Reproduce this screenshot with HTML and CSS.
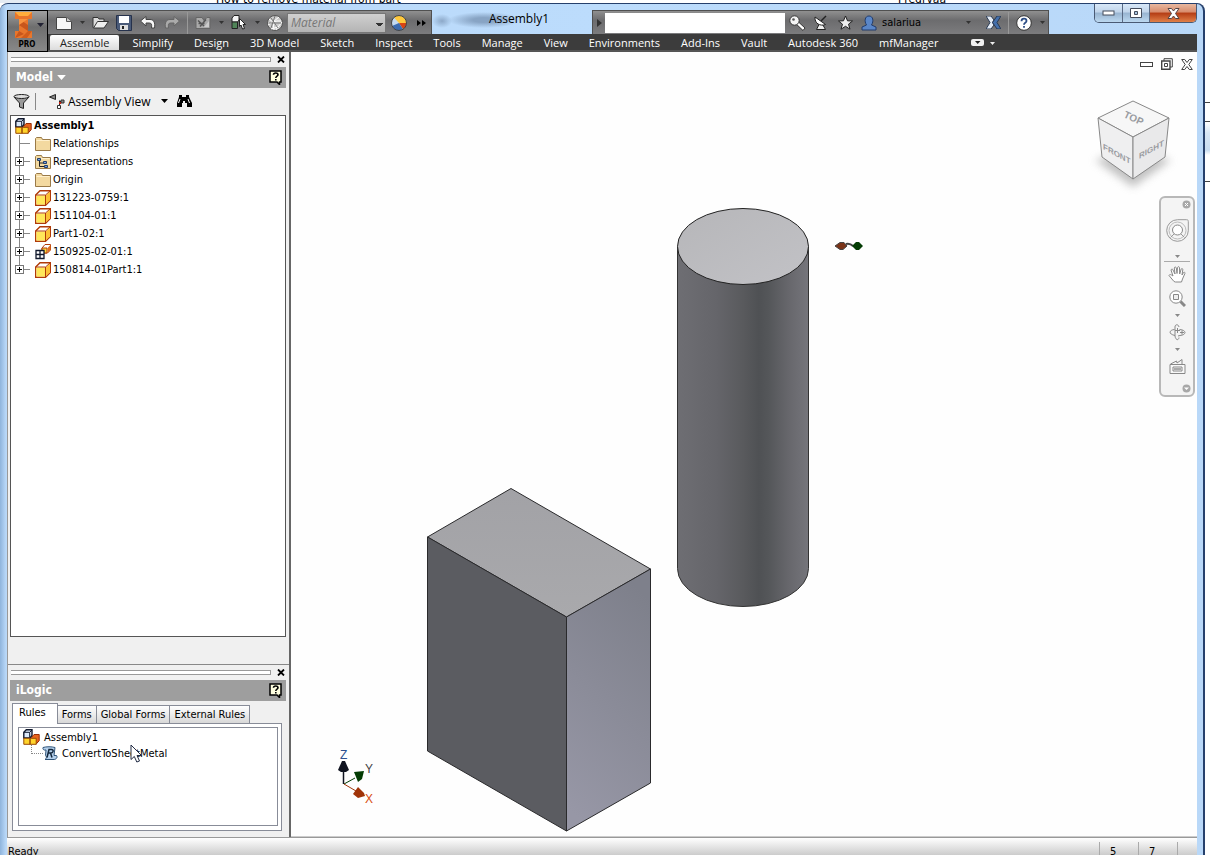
FILE: index.html
```html
<!DOCTYPE html>
<html lang="en">
<head>
    <meta charset="UTF-8">
    <meta name="viewport" content="width=device-width, initial-scale=1.0">
    <title>Assembly1</title>
    <link rel="stylesheet" href="styles.css">
</head>
<body>
    <svg class="defs" aria-hidden="true">
        <symbol id="folder" viewBox="0 0 16 16">
            <path d="M.5 14.5v-12l1-1h5l1 2h8v11z" fill="#f3d9a0" stroke="#9a7a48"/>
            <path d="M1.5 4.500h13" stroke="#fff0cc"/>
        </symbol>
        <symbol id="part" viewBox="0 0 16 16">
            <path d="M.7 5 5 .7h10.300v9.800l-4.800 4.800H.7z" fill="#fff" stroke="#b03a08" stroke-width="1.400"/>
            <path d="M1.400 5.500h8.800v9.100H1.400z" fill="#ffe75a"/>
            <path d="M10.800 5.500 15 1.500v8.800l-4.200 4.200z" fill="#fcc034"/>
            <path d="M.7 5h9.800v10.300M10.500 5 15.300.7" fill="none" stroke="#b03a08"/>
        </symbol>
        <symbol id="assembly" viewBox="0 0 17 16">
            <path d="M.8 9V3.200L3.300.8H9v5.700L7 9z" fill="#dce9fa" stroke="#10182c" stroke-width="1.400"/>
            <path d="M6.700 8.500V3.300H1M6.700 3.300 9 1" fill="none" stroke="#10182c"/>
            <path d="m8.500 8.500 2.500-3h5.200v6.200L13 15.200z" fill="#e8641c" stroke="#9a2c04"/>
            <path d="M.8 9.300h6.200v6H.8zM7 9.300h6.200v6H7z" fill="#ffd42c" stroke="#9a4a04"/>
        </symbol>
        <symbol id="help" viewBox="0 0 14 15">
            <path d="M1 1h11v11h-1.500v2.500L8 12H1z" fill="#ffffe0" stroke="#000" stroke-width="1.500"/>
            <path d="M4.500 4.800C4.500 2.300 9 2.300 9 4.800 9 6.300 6.800 6 6.800 8M6.800 9v1.600" fill="none" stroke="#000" stroke-width="1.600"/>
        </symbol>
        <symbol id="down" viewBox="0 0 7 4"><path d="M0 0h7L3.500 4z" fill="currentColor"/></symbol>
        <symbol id="cross" viewBox="0 0 8 7"><path d="M1 .5 7 6.500M7 .5 1 6.500" stroke="#000" stroke-width="1.800"/></symbol>
    </svg>

    <div class="behind">
        <span>How to remove material from part</span>
        <span>Predrvaa</span>
    </div>

    <div class="window">
        <header class="header">
            <button class="app-button" aria-label="Application menu">
                <svg width="17" height="26" viewBox="0 0 17 26">
                    <path d="M0 0h17v7h-4v12h4v7H0v-7h4V7H0z" fill="#e8762c"/>
                    <path d="M0 0h17l-4 4H4z" fill="#ffae3c"/>
                    <path d="m4 7 9 6v6l-9-6z" fill="#c8561c"/>
                    <path d="m0 26 4-7 5 3z" fill="#c8561c"/>
                    <path d="m13 7-9 6V7z" fill="#f89440"/>
                    <path d="m17 19-5 7H6l7-7z" fill="#d05c1c"/>
                </svg>
                <span>PRO</span>
                <svg class="app-arrow" width="7" height="4"><use href="#down"/></svg>
            </button>

            <div class="titlebar">
                <div class="quick">
                    <button aria-label="New"><svg width="16" height="14"><path d="M.5 1.500h10l5 4v8H.5z" fill="#f6f6f6" stroke="#444"/><path d="M10.500 1.500v4h5" fill="#ccc" stroke="#555"/></svg></button>
                    <button class="drop" aria-label="New options"><svg width="5" height="3"><use href="#down"/></svg></button>
                    <button aria-label="Open"><svg width="17" height="13"><path d="M1 11.500v-10h5l1 1.500h5v3" fill="#ddd" stroke="#333"/><path d="m1.500 12 4-6.500h11l-4.500 6.500z" fill="#eee" stroke="#333"/></svg></button>
                    <button aria-label="Save"><svg width="16" height="16"><path d="M.5.5h15v15h-13l-2-2z" fill="#4a5a78" stroke="#26324c"/><path d="M3 1h10v7H3z" fill="#fff"/><path d="M4 10h8v5H4z" fill="#ddd"/><path d="M6 11h2v3H6z" fill="#222"/></svg></button>
                    <button aria-label="Undo"><svg width="16" height="13"><path d="m.5 5 5.500-4.500v3h4c3.500 0 5.500 3 4.500 8.500h-3c.5-3.500 0-5-2-5H6v3z" fill="#f8f8f8" stroke="#444"/></svg></button>
                    <button aria-label="Redo"><svg width="16" height="13"><path d="M15.500 5 10 .5v3H6C2.500 3.500.5 6.500 1.500 12h3C4 8.500 4.500 7 6.500 7H10v3z" fill="#aaa" stroke="#666"/></svg></button>
                    <i class="divider"></i>
                    <button aria-label="Update"><svg width="17" height="15"><path d="M1 2.500h6l2 3 3-3h3v11H1z" fill="#aaa" stroke="#666"/><path d="M3 5.500 9 11M11 4.500 5 11.500M3.500 8.500h6" stroke="#555" stroke-width="1.500"/><path d="m9 12 5-6v6z" fill="#ccc"/></svg></button>
                    <button class="drop" aria-label="Update options"><svg width="5" height="3"><use href="#down"/></svg></button>
                    <button aria-label="Select"><svg width="16" height="15"><path d="M1 3 3 .5h5V5L6.500 7H1z" fill="#f4f4f4" stroke="#222"/><path d="M1 7h5.500v6.500H1z" fill="#508458" stroke="#222"/><path d="m8.500 3.500 6 6H12l1.500 4-2 .5-1.500-4-1.500 1.500z" fill="#fff" stroke="#222"/></svg></button>
                    <button class="drop" aria-label="Select options"><svg width="5" height="3"><use href="#down"/></svg></button>
                    <button aria-label="Appearance"><svg width="16" height="16"><circle cx="8" cy="8" r="7.500" fill="#ccc" stroke="#555"/><path d="m2 4 4 3 6-5M1 10l5-3 5 5 4-5M6 7l1 8m4-3-2 3M6 7l4-1 4 0M4 14l7-2" fill="none" stroke="#fff"/><path d="m4 3 7 10M2 8h12M8 1 4 13" stroke="#777"/></svg></button>
                    <select class="material" aria-label="Material"><option>Material</option></select>
                    <button aria-label="Colour"><svg width="16" height="16"><circle cx="8" cy="8" r="7.500" fill="#c4daf0"/><path d="M8 8 3 2.400A7.500 7.500 0 0 1 15.500 8z" fill="#ffc83c"/><path d="M8 8h7.500A7.500 7.500 0 0 1 12 14.300z" fill="#d84414"/><path d="M8 8 1 11a7.500 7.500 0 0 0 11 3.300z" fill="#3c6cb0"/><circle cx="8" cy="8" r="7.500" fill="none" stroke="#444"/></svg></button>
                    <button class="more" aria-label="More"><svg width="9" height="6"><path d="M0 0l4 3-4 3zM5 0l4 3-4 3z" fill="#000"/></svg></button>
                </div>

                <h1 class="title">Assembly1</h1>

                <div class="search">
                    <button class="drop" aria-label="Show search"><svg width="5" height="8"><path d="m0 0 5 4-5 4z" fill="#333"/></svg></button>
                    <input type="text" aria-label="Search">
                    <button aria-label="Key"><svg width="17" height="16"><path d="M9.500 7 16 13l-2 2.500-6.500-6.200" fill="#fff" stroke="#333"/><circle cx="5.500" cy="5.500" r="4.700" fill="#f4f4f4" stroke="#333"/><circle cx="4.500" cy="4.500" r="1.300" fill="#555"/></svg></button>
                    <button aria-label="Subscription"><svg width="14" height="16"><path d="M5.500 8.500 2.500 14.500h9L8 8.500" fill="#eee" stroke="#222"/><path d="M1 2c-.5 6.500 5 9.500 10.500 7.500z" fill="#fff" stroke="#222"/><path d="m7 6 5-5" stroke="#222" stroke-width="1.500"/></svg></button>
                    <button aria-label="Favorites"><svg width="15" height="15"><path d="m7.500 1 2 4.800 5 .2-4 3.200 1.500 5-4.500-2.900L3 14.200l1.500-5L.5 6l5-.2z" fill="#eee" stroke="#222"/></svg></button>
                    <button class="user"><svg width="16" height="16"><path d="M1 15v-3l4.500-2C3 6 4 1 8 1s5 5 2.500 9l4.500 2v3z" fill="#5a86c8" stroke="#223c6c"/></svg><span>salariua</span><svg width="5" height="3"><use href="#down"/></svg></button>
                    <button aria-label="Exchange"><svg width="15" height="13"><path d="M0 0h5l3 4-1.500 2.500L8 9l-3 4H0l4-6.500z" fill="#e4ecf6" stroke="#2a3a54"/><path d="M15 0h-4L6.500 6.500 11 13h4l-4-6.500z" fill="#4470ac" stroke="#2a3a54"/></svg></button>
                    <i class="divider"></i>
                    <button aria-label="Help"><svg width="16" height="16"><circle cx="8" cy="8" r="7.300" fill="#fff" stroke="#333"/><path d="M5.500 6.200c0-3.400 5-3.200 5-.2 0 2-2.500 1.700-2.500 3.800M8 11v1.800" fill="none" stroke="#2c4c84" stroke-width="1.800"/></svg></button>
                    <button class="drop" aria-label="Help options"><svg width="5" height="3"><use href="#down"/></svg></button>
                </div>

                <div class="controls">
                    <button aria-label="Minimize"><svg width="13" height="6"><rect x="1" y="1" width="11" height="4" fill="#fff" stroke="#444c5c"/></svg></button>
                    <button aria-label="Restore"><svg width="12" height="10"><path d="M.5.5h11v9H.5z" fill="#fff" stroke="#444c5c"/><path d="M4.500 3.500h3v3h-3z" fill="#a8c4e0" stroke="#444c5c"/></svg></button>
                    <button class="close" aria-label="Close"><svg width="13" height="11"><path d="m1 .5h3.500l2 2.500 2-2.500H12L8.500 5.500l3.500 5H8.500L6.500 8l-2 2.500H1l3.500-5z" fill="#fff" stroke="#544"/></svg></button>
                </div>
            </div>

            <nav class="ribbon">
                <button class="active">Assemble</button>
                <button>Simplify</button>
                <button>Design</button>
                <button>3D Model</button>
                <button>Sketch</button>
                <button>Inspect</button>
                <button>Tools</button>
                <button>Manage</button>
                <button>View</button>
                <button>Environments</button>
                <button>Add-Ins</button>
                <button>Vault</button>
                <button>Autodesk 360</button>
                <button>mfManager</button>
                <button class="ribbon-toggle" aria-label="Minimize ribbon">
                    <svg width="24" height="8"><rect width="13" height="7" rx="2" fill="#f0f0f0"/><path d="M4 2h5.500L6.700 5z" fill="#222"/><path d="M19 3h5l-2.500 3z" fill="#eee"/></svg>
                </button>
            </nav>
        </header>

        <main class="main">
            <aside class="side">
                <section class="panel model">
                    <div class="grip"><i></i><button aria-label="Close Model"><svg width="8" height="7"><use href="#cross"/></svg></button></div>
                    <h2>Model <svg width="9" height="5" viewBox="0 0 7 4"><use href="#down"/></svg><button aria-label="Help on Model"><svg width="14" height="15"><use href="#help"/></svg></button></h2>
                    <div class="tools">
                        <button aria-label="Filter"><svg width="17" height="15"><path d="m1 3 5.500 6v4l4 1.500V9L16 3z" fill="#999" stroke="#222"/><ellipse cx="8.500" cy="2.500" rx="7.500" ry="2" fill="#ddd" stroke="#222"/></svg></button>
                        <i></i>
                        <button class="view"><svg width="16" height="15"><path d="M6.500.5.5 3l6 2.500z" fill="#888" stroke="#222"/><path d="M10.500 6.500v6M10.500 7.500h4" stroke="#222" fill="none"/><path d="M12 6h3v3h-3z" fill="#888" stroke="#333"/><path d="M8.500 11.500h3v3h-3z" fill="#fff" stroke="#333"/><path d="M10 8h2v2h-2z" fill="#c82010"/></svg><span>Assembly View</span><svg width="7" height="4"><use href="#down"/></svg></button>
                        <button aria-label="Find"><svg width="16" height="14"><path d="M3 1h3v2h4V1h3v2l3 6v4h-5V9H9V7H7v2H6v4H1V9l2-6z" fill="#000"/><path d="M4 5 2.500 9M12 5l1.500 4" stroke="#fff"/></svg></button>
                    </div>
                    <ul class="tree">
                        <li class="root"><svg width="17" height="16"><use href="#assembly"/></svg>Assembly1</li>
                        <li class="leaf"><b></b><svg width="16" height="16"><use href="#folder"/></svg>Relationships</li>
                        <li><b></b><svg width="16" height="16"><use href="#folder"/><path d="M4.500 6v6.500H9M4.500 9H9" fill="none" stroke="#222"/><path d="M2.500 4.500h3v2h-3zM8.500 7.500h3v2h-3zM9.500 11.500h3v2h-3z" fill="#7ca4e0" stroke="#24406c"/></svg>Representations</li>
                        <li><b></b><svg width="16" height="16"><use href="#folder"/></svg>Origin</li>
                        <li><b></b><svg width="16" height="16"><use href="#part"/></svg>131223-0759:1</li>
                        <li><b></b><svg width="16" height="16"><use href="#part"/></svg>151104-01:1</li>
                        <li><b></b><svg width="16" height="16"><use href="#part"/></svg>Part1-02:1</li>
                        <li><b></b><svg width="16" height="16"><path d="m7 4 3-3.500h5.500V6L12.500 9H7z" fill="#fff" stroke="#b03a08"/><path d="M7 4h5v5H7z" fill="#ffd83c" stroke="#b03a08"/><path d="m12.500 4 3-3V6l-3 3z" fill="#e07020"/><path d="M1 6.500h8v8H1zM1 10.500h8M5 6.500v8" fill="#fff" stroke="#10182c" stroke-width="1.300"/></svg>150925-02-01:1</li>
                        <li class="last"><b></b><svg width="16" height="16"><use href="#part"/></svg>150814-01Part1:1</li>
                    </ul>
                </section>

                <section class="panel ilogic">
                    <div class="grip"><i></i><button aria-label="Close iLogic"><svg width="8" height="7"><use href="#cross"/></svg></button></div>
                    <h2>iLogic<button aria-label="Help on iLogic"><svg width="14" height="15"><use href="#help"/></svg></button></h2>
                    <div class="tabs">
                        <button class="active">Rules</button>
                        <button>Forms</button>
                        <button>Global Forms</button>
                        <button>External Rules</button>
                    </div>
                    <div class="page">
                        <ul class="rules">
                            <li><svg width="17" height="16"><use href="#assembly"/></svg>Assembly1</li>
                            <li class="rule"><svg width="16" height="15"><path d="M1 1.500c3-1 9-1 12 0l-1 8h2.500c1.500 2-.5 4-2.500 4H3c2-1 1.500-3 .5-4L4 4C1.500 4.500.5 3 1 1.500z" fill="#b4d0ec" stroke="#305478"/><path d="M5 11.500 7 3.500h2.500c2.500 0 2 3.500-.5 3.500H6.500M8.500 7l1.500 4.500" fill="none" stroke="#14283c" stroke-width="1.500"/></svg>ConvertToSheetMetal</li>
                        </ul>
                    </div>
                    <svg class="cursor" width="12" height="19"><path d="M1 1v14.500l3.300-3 2.500 5.500 2.700-1-2.500-5.500h4.500z" fill="#fff" stroke="#222c44"/></svg>
                </section>
            </aside>

            <div class="viewport">
                <svg class="scene" viewBox="291 52 906 785" preserveAspectRatio="xMinYMin meet">
                    <defs>
                        <linearGradient id="round">
                            <stop offset="0" stop-color="#6e6e73"/>
                            <stop offset=".3" stop-color="#65656a"/>
                            <stop offset=".5" stop-color="#595a5d"/>
                            <stop offset=".62" stop-color="#4f5154"/>
                            <stop offset=".7" stop-color="#55575a"/>
                            <stop offset=".85" stop-color="#67676c"/>
                            <stop offset="1" stop-color="#75757b"/>
                        </linearGradient>
                        <linearGradient id="cap" x1="0" y1="0" x2="1" y2="1">
                            <stop offset="0" stop-color="#b6b6b9"/><stop offset="1" stop-color="#c2c2c6"/>
                        </linearGradient>
                        <linearGradient id="boxSide" x1=".6" y1="0" x2=".3" y2="1">
                            <stop offset="0" stop-color="#7e808b"/><stop offset="1" stop-color="#9797a6"/>
                        </linearGradient>
                        <linearGradient id="boxTop" x1="0" y1="0" x2="0" y2="1">
                            <stop offset="0" stop-color="#a2a2a6"/><stop offset="1" stop-color="#a9a9ac"/>
                        </linearGradient>
                        <filter id="soft" x="-30%" y="-30%" width="160%" height="160%"><feGaussianBlur stdDeviation="4"/></filter>
                    </defs>

                    <!-- cylinder -->
                    <path d="M677.500 246.500v322a65.500 38 0 0 0 131 0v-322z" fill="url(#round)"/>
                    <path d="M677.500 246.500v322a65.500 38 0 0 0 131 0v-322" fill="none" stroke="#333"/>
                    <ellipse cx="743" cy="246.500" rx="65.500" ry="38" fill="url(#cap)" stroke="#222"/>

                    <!-- box -->
                    <g stroke="#2a2a2c" stroke-linejoin="round">
                        <path d="M511 488.500 650.500 569 566.500 617 427.500 537z" fill="url(#boxTop)"/>
                        <path d="M427.500 537 566.500 617v214L427.500 751z" fill="#5b5c61"/>
                        <path d="M566.500 617 650.500 569v214l-84 48z" fill="url(#boxSide)"/>
                    </g>

                    <!-- work point handles -->
                    <path d="M846 244q4-1 7 2" fill="none" stroke="#444" stroke-width="2"/>
                    <path d="m835 246 5-3.500h4l3 3.500-4 3.500h-3z" fill="#7a3418" stroke="#444"/>
                    <path d="m852 246 4-4h3l4 4-4 4h-3z" fill="#043c04"/>

                    <!-- axis triad -->
                    <path d="M343.500 784v-12" stroke="#101420" stroke-width="1.500"/>
                    <path d="m338 770 4-9h3l4 9-3 2h-5z" fill="#101420"/>
                    <path d="m344 784 11-6" stroke="#043c04"/>
                    <path d="m354 772 10-1-2 8-4 3z" fill="#043c04"/>
                    <path d="m344 784 12 7" stroke="#a03408"/>
                    <path d="m353 794 5-7 6 6 1 3-7 2z" fill="#a03408"/>
                    <g class="axis">
                        <text x="340" y="759" fill="#2c5090">Z</text>
                        <text x="365" y="773" fill="#444">Y</text>
                        <text x="365" y="803" fill="#d84c10">X</text>
                    </g>

                    <!-- view cube -->
                    <path d="m1095 160 38-10 38 10-38 27z" fill="#999" opacity=".6" filter="url(#soft)"/>
                    <g stroke="#888" stroke-linejoin="round">
                        <path d="m1133 101 36 17-36 19-35-19z" fill="#f7f7f7"/>
                        <path d="m1098 118 35 19v42l-31-22z" fill="#efeff0"/>
                        <path d="m1169 118-36 19v42l32-22z" fill="#e9e9ea"/>
                    </g>
                    <g class="cube">
                        <text class="cube-top" transform="translate(1123 117) rotate(25)">TOP</text>
                        <text transform="translate(1103 149) skewY(29)">FRONT</text>
                        <text transform="translate(1139 159) skewY(-29)">RIGHT</text>
                    </g>
                </svg>

                <div class="doc-controls">
                    <button aria-label="Minimize document"><svg width="13" height="6"><rect x=".5" y="1.500" width="12" height="4" fill="#fff" stroke="#444"/></svg></button>
                    <button aria-label="Restore document"><svg width="12" height="12"><path d="M3 3V.7h8.300V9H9" fill="#fff" stroke="#444"/><path d="M.7 3H9v8.300H.7z" fill="#fff" stroke="#444" stroke-width="1.400"/><path d="M3.500 5.500h3v3h-3z" fill="none" stroke="#444"/></svg></button>
                    <button aria-label="Close document"><svg width="12" height="11"><path d="M.7.5h3l2.300 3 2.300-3h3L7.800 5.500l3.500 5h-3L6 7.500l-2.300 3h-3l3.500-5z" fill="#fff" stroke="#444"/></svg></button>
                </div>

                <div class="navbar">
                    <button class="nav-end" aria-label="Close navigation bar"><svg width="9" height="9"><circle cx="4.500" cy="4.500" r="4" fill="#a8a8a8"/><path d="m3 3 3 3m0-3-3 3" stroke="#fff"/></svg></button>
                    <button class="wheel" aria-label="Steering wheel"><svg width="23" height="23"><path d="M11.500.7h9c1.500 0 1.800.5 1.800 2v9A10.800 10.800 0 1 1 11.500.7z" fill="#f4f4f4" stroke="#999"/><circle cx="11.500" cy="11.500" r="8.500" fill="none" stroke="#bbb"/><circle cx="11.500" cy="11" r="5" fill="#fff" stroke="#888"/><path d="m8 15-3.500 3.500M15 15l3.500 3.500" stroke="#999"/></svg></button>
                    <button class="nav-drop" aria-label="Wheel options"><svg width="5" height="3"><use href="#down"/></svg></button>
                    <hr>
                    <button aria-label="Pan"><svg width="18" height="17"><path d="M6 15.500 1 9.500C1.500 8 3 8.500 5 10L3 4c.5-1.500 1.800-1 2 0l2 4-.7-6c.4-1.500 1.700-1.200 2 0l.7 5.500L9.500 1.500c.5-1.200 1.800-1 2 .2L11.700 8l1.500-5c.5-1 1.800-.5 1.600.7L14 9l1.500-2.500c1-.7 1.700 0 1.400 1L14.500 13l-1 3h-6z" fill="#fff" stroke="#888"/></svg></button>
                    <button aria-label="Zoom"><svg width="17" height="17"><circle cx="7" cy="7" r="6.200" fill="#fff" stroke="#888"/><path d="M4.500 4.500h5v5h-5z" fill="#eee" stroke="#888"/><path d="m11.500 11.500 4.500 4.500" stroke="#888" stroke-width="3"/></svg></button>
                    <button class="nav-drop" aria-label="Zoom options"><svg width="5" height="3"><use href="#down"/></svg></button>
                    <button aria-label="Orbit"><svg width="17" height="17"><path d="M6 11.500C-1 10 0 6 5.500 5.500m5 0C18 6 17.500 11 11 11.500L9 12" fill="none" stroke="#888"/><path d="M6 12V3c0-3 3.500-3 4 0M6 12c.5 4 3.500 5 4 1.500" fill="none" stroke="#888"/><path d="M8.500 4v5M6 6.500h5M11 8.500h4M13 6.500v4" stroke="#888"/></svg></button>
                    <button class="nav-drop" aria-label="Orbit options"><svg width="5" height="3"><use href="#down"/></svg></button>
                    <button aria-label="Look at"><svg width="17" height="17"><path d="M1 6.500h15v9H1zM4 9h9v4H4z" fill="#f8f8f8" stroke="#888"/><path d="m1.500 6 6-3 .5 2 5-3.500V6" fill="none" stroke="#888"/><path d="M5 10h7v2H5z" fill="#aaa"/></svg></button>
                    <button class="nav-end" aria-label="Navigation bar options"><svg width="9" height="9"><circle cx="4.500" cy="4.500" r="4" fill="#a8a8a8"/><path d="M2 3.500h5L4.500 6z" fill="#fff"/></svg></button>
                </div>
            </div>
        </main>

        <footer class="status">
            <span class="ready">Ready</span>
            <span>5</span>
            <span>7</span>
            <span></span>
        </footer>
    </div>
</body>
</html>
```
FILE: styles.css
```css
* {
    box-sizing: border-box;
}

body {
    margin: 0;
    height: 100vh;
    overflow: hidden;
    display: flex;
    flex-direction: column;
    background: linear-gradient(#fff 102px, #444 102px, #444 103px, #fff 103px, #fff 121px, #444 121px, #444 122px, #fff 122px, #d8e6f4 133px, #c8dcf0 150px, #fff 155px, #fff 181px, #444 181px, #444 182px, #fff 182px);
    font-family: "DejaVu Sans Condensed", "Liberation Sans", sans-serif;
    font-size: 11px;
    color: #000;
}

button {
    border: 0;
    padding: 0;
    background: none;
    color: inherit;
    font: inherit;
    cursor: pointer;
    display: flex;
    align-items: center;
    justify-content: center;
}

svg {
    display: block;
    flex: none;
}

ul {
    list-style: none;
    margin: 0;
    padding: 0;
}

.defs {
    position: absolute;
    width: 0;
    height: 0;
}

/* page showing above the window */
.behind {
    height: 3px;
    overflow: hidden;
    display: flex;
    justify-content: space-between;
    align-items: flex-end;
    padding: 0 264px 0 216px;
    font-size: 12px;
    line-height: 7px;
    background: linear-gradient(90deg, #e4ebf3 150px, #fff 150px);
}

.window {
    flex: 1;
    min-height: 0;
    margin-right: 5px;
    padding: 0 6px;
    display: flex;
    flex-direction: column;
    border: 1px solid #26406c;
    border-width: 1px 2px 0 0;
    border-radius: 8px 8px 0 0;
    background: linear-gradient(90deg, #8fb4dc, #b9d8f8 6px, #bcdcfc 50%, #b9d8f8);
}

/* header */
.header {
    display: grid;
    grid-template-columns: 41px 1fr;
    grid-template-rows: 30px 18px;
    margin-left: 1px;
}

.app-button {
    grid-row: 1 / 3;
    align-self: end;
    height: 42px;
    display: grid;
    grid-template-columns: 26px 9px;
    grid-template-rows: 28px 10px;
    align-items: center;
    justify-items: center;
    border: 1px solid #000;
    background: linear-gradient(#a0a0a0, #6e6e6e 40%, #888);
    font-size: 8px;
    font-weight: bold;
}

.app-button span {
    grid-row: 2;
    padding-left: 8px;
}

.app-arrow {
    grid-row: 1;
    grid-column: 2;
    color: #223;
}

.titlebar {
    display: flex;
    align-items: flex-end;
    min-width: 0;
}

.quick,
.search {
    display: flex;
    align-items: center;
    height: 24px;
    background: linear-gradient(#909090, #6c6c6e 40%, #7c7c7e);
    border: 1px solid #505050;
    border-width: 1px 1px 0 0;
    color: #333;
}

.quick {
    padding-left: 4px;
}

.quick button,
.search button {
    width: 24px;
    height: 22px;
}

.quick .drop,
.search .drop {
    width: 12px;
}

.quick .more {
    width: 20px;
}

.divider {
    width: 1px;
    height: 22px;
    margin: 0 3px;
    background: #999;
}

.material {
    width: 99px;
    height: 20px;
    margin-right: 1px;
    padding: 0 4px 0 3px;
    appearance: none;
    border: 1px solid #777;
    border-radius: 0;
    background: linear-gradient(#333, #333) 88px 9px / 7px 1px no-repeat, linear-gradient(#333, #333) 89px 10px / 5px 1px no-repeat, linear-gradient(#333, #333) 90px 11px / 3px 1px no-repeat, linear-gradient(#d0d0d0, #b4b4b4);
    color: #777;
    font: italic 12px "Open Sans", sans-serif;
}

.title {
    flex: 1;
    align-self: center;
    margin: 0;
    padding-left: 14px;
    font: 12px/20px "Open Sans", sans-serif;
    text-align: center;
    background: radial-gradient(ellipse 10px 7px at 10px 12px, #8ca8c8, transparent), radial-gradient(ellipse 36px 8px at 52px 11px, #88a4c4 30%, transparent);
}

.search {
    margin-right: 45px;
    border-left: 1px solid #505050;
}

.search input {
    width: 180px;
    height: 20px;
    border: 0;
    padding: 0 4px;
    background: #fff;
}

.search .user {
    width: 124px;
    padding: 0 10px 0 4px;
    gap: 5px;
}

.user span {
    flex: 1;
    color: #000;
    text-align: left;
}

.controls {
    display: flex;
    align-self: flex-start;
    width: 103px;
    height: 19px;
    border: 1px solid #4a5a74;
    border-top: 0;
    border-radius: 0 0 5px 5px;
    overflow: hidden;
}

.controls button {
    flex: 1;
    border-right: 1px solid #5a6a84;
    background: linear-gradient(#d8e8f8, #c0d4ea 45%, #98b4d0 50%, #bcd8f0);
}

.controls .close {
    flex: 0 0 46px;
    border: 0;
    background: linear-gradient(#e8b8a0, #d88c6c 45%, #b43c14 50%, #e08048);
}

.ribbon {
    display: flex;
    gap: 5px;
    padding: 1px 0 0 2px;
    background: #3c3c3c;
    border-bottom: 2px solid #555;
    color: #fff;
    font: 11px/15px "Open Sans", sans-serif;
}

.ribbon button {
    padding: 0 8px;
    white-space: nowrap;
}

.ribbon .active {
    padding: 0 10px;
    background: linear-gradient(#fff, #dcdcdc);
    border-radius: 2px 2px 0 0;
    color: #222;
}

.ribbon .ribbon-toggle {
    padding-left: 20px;
}

/* docked panels */
.main {
    flex: 1;
    min-height: 0;
    display: flex;
    margin-left: 1px;
    background: #fff;
}

.side {
    flex: 0 0 284px;
    display: flex;
    flex-direction: column;
    background: #f0f0f0;
    border-right: 2px solid #666;
    border-left: 1px solid #999;
}

.panel {
    padding: 4px 3px 0 2px;
    display: flex;
    flex-direction: column;
}

.model {
    flex: 1;
    min-height: 0;
    padding-bottom: 27px;
    border-bottom: 1px solid #888;
}

.grip {
    display: flex;
    align-items: center;
    height: 7px;
    padding-left: 1px;
    gap: 5px;
}

.grip i {
    flex: 1;
    height: 5px;
    border: 1px solid #999;
    border-width: 1px 1px 1px 0;
    background: #fff;
}

.grip button {
    width: 10px;
}

.panel h2 {
    display: flex;
    align-items: center;
    gap: 4px;
    height: 21px;
    flex: none;
    margin: 4px 0 0;
    padding: 0 3px 0 6px;
    background: #9e9e9e;
    color: #fff;
    font: bold 12px/21px "DejaVu Sans Condensed", "Liberation Sans", sans-serif;
}

.panel h2 button {
    margin-left: auto;
}

.tools {
    display: flex;
    align-items: center;
    height: 26px;
    flex: none;
    padding-left: 3px;
    font: 12px "Open Sans", sans-serif;
}

.tools i {
    width: 1px;
    height: 17px;
    margin: 0 13px 0 5px;
    background: #888;
}

.tools .view {
    gap: 3px;
    margin-right: 8px;
}

.view span {
    padding-right: 7px;
}

.tree {
    flex: 1;
    margin-top: 1px;
    padding-top: 1px;
    border: 1px solid #555;
    background: #fff;
}

.tree li {
    display: flex;
    align-items: center;
    gap: 2px;
    height: 18px;
    padding-left: 4px;
    line-height: 18px;
    white-space: nowrap;
}

.tree .root {
    font-size: 11px;
    font-weight: bold;
}

/* tree line with the expander box */
.tree b {
    width: 18px;
    height: 18px;
    background:
        linear-gradient(#000, #000) 2px 8px / 5px 1px no-repeat,
        linear-gradient(#000, #000) 4px 6px / 1px 5px no-repeat,
        linear-gradient(#fff, #fff) 1px 5px / 7px 7px no-repeat,
        linear-gradient(#777, #777) 0 4px / 9px 9px no-repeat,
        linear-gradient(#888, #888) 4px 0 / 1px 18px no-repeat,
        linear-gradient(#888, #888) 9px 8px / 6px 1px no-repeat;
}

.tree .leaf b {
    background:
        linear-gradient(#888, #888) 4px 0 / 1px 18px no-repeat,
        linear-gradient(#888, #888) 4px 8px / 11px 1px no-repeat;
}

.tree .last b {
    background-size: 5px 1px, 1px 5px, 7px 7px, 9px 9px, 1px 8px, 6px 1px;
}

.ilogic {
    position: relative;
    padding-bottom: 6px;
}

.tabs {
    display: flex;
    align-items: flex-end;
    height: 22px;
    padding: 2px 0 0 2px;
}

.tabs button {
    height: 18px;
    padding: 0 4px;
    border: 1px solid #888c98;
    border-left: 0;
    border-bottom: 0;
    background: linear-gradient(#fff, #d8d8d8);
    white-space: nowrap;
}

.tabs .active {
    position: relative;
    z-index: 1;
    height: 21px;
    margin-bottom: -1px;
    padding: 0 11px 3px 6px;
    border-left: 1px solid #888c98;
    background: #fff;
}

.page {
    height: 108px;
    margin: 0 4px 0 2px;
    padding: 3px 3px 4px 5px;
    border: 1px solid #888c98;
    background: #fff;
}

.rules {
    height: 99px;
    padding: 1px 4px;
    border: 1px solid #888c98;
}

.rules li {
    display: flex;
    align-items: center;
    gap: 4px;
    height: 16px;
}

.rules .rule {
    padding-left: 19px;
    background:
        repeating-linear-gradient(90deg, #888 0 1px, #fff 1px 2px) 9px 8px / 11px 1px no-repeat,
        repeating-linear-gradient(#888 0 1px, #fff 1px 2px) 8px 0 / 1px 9px no-repeat;
}

.cursor {
    position: absolute;
    left: 122px;
    top: 79px;
}

/* drawing area */
.viewport {
    flex: 1;
    min-width: 0;
    position: relative;
    overflow: hidden;
    background: #fefefe;
    border-bottom: 1px solid #ccc;
}

.scene {
    width: 100%;
}

.axis {
    font: 12px "Liberation Sans", sans-serif;
}

.cube {
    font: bold 8px "Liberation Sans", sans-serif;
    fill: #999ba0;
}

.cube-top {
    font-size: 10px;
}

.doc-controls {
    position: absolute;
    top: 6px;
    right: 4px;
    display: flex;
    align-items: center;
    gap: 8px;
}

.navbar {
    position: absolute;
    top: 144px;
    right: 2px;
    width: 36px;
    display: flex;
    flex-direction: column;
    align-items: center;
    padding: 2px;
    border: 2px solid #b8b8b8;
    border-radius: 6px;
    background: #f4f4f4;
    color: #888;
}

.navbar button {
    height: 24px;
}

.navbar .wheel {
    height: 42px;
}

.navbar .nav-end {
    align-self: flex-end;
    height: 9px;
}

.navbar .nav-end:last-child {
    margin-top: 6px;
}

.navbar .nav-drop {
    height: 10px;
}

.navbar hr {
    width: 26px;
    margin: 0;
    border: 0;
    border-top: 1px solid #aaa;
}

.status {
    display: flex;
    height: 18px;
    overflow: hidden;
    margin-left: 1px;
    border-top: 1px solid #999;
    background: linear-gradient(#fff, #ccc);
}

.status span {
    width: 39px;
    margin-top: 4px;
    padding: 3px 0 0 10px;
    border-left: 1px solid #aaa;
    line-height: 14px;
}

.status .ready {
    flex: 1;
    padding-left: 1px;
    border: 0;
}

.status span:last-child {
    width: 20px;
}
```
